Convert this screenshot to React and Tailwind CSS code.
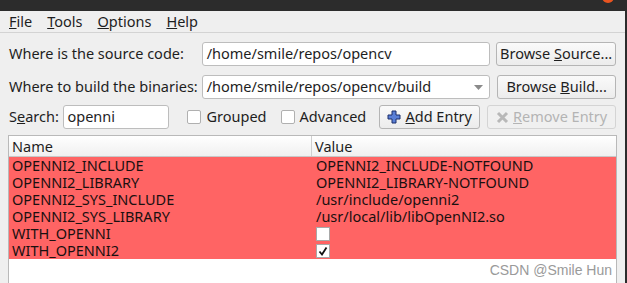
import React from "react";

const font = { fontFamily: '"Noto Sans", "Open Sans", sans-serif' };

const rows = [
  ["OPENNI2_INCLUDE", "OPENNI2_INCLUDE-NOTFOUND"],
  ["OPENNI2_LIBRARY", "OPENNI2_LIBRARY-NOTFOUND"],
  ["OPENNI2_SYS_INCLUDE", "/usr/include/openni2"],
  ["OPENNI2_SYS_LIBRARY", "/usr/local/lib/libOpenNI2.so"],
  ["WITH_OPENNI", "box"],
  ["WITH_OPENNI2", "checked"],
];

function Btn({ children, className = "", disabled }) {
  return (
    <div
      className={
        "h-[24px] flex items-center justify-center rounded-[3px] border text-[14.5px] " +
        (disabled
          ? "border-[#d4d4d4] bg-[#f0f0f0] text-[#b4b4b4] "
          : "border-[#b5b5b5] bg-gradient-to-b from-[#fafafa] to-[#ececec] text-[#1e1e1e] ") +
        className
      }
    >
      {children}
    </div>
  );
}

function Check() {
  return <div className="w-[14px] h-[14px] bg-white border border-[#b0b0b0] rounded-[2px]" />;
}

export default function App() {
  return (
    <div className="w-[627px] h-[283px] overflow-hidden bg-[#2c2c2c] flex flex-col" style={font}>
      {/* title bar remnant */}
      <div className="h-[11px] shrink-0 relative">
        <div className="absolute right-[13px] -top-[9px] w-[12px] h-[12px] rounded-full bg-[#e95420]" />
      </div>
      <div className="flex flex-1 min-h-0">
        <div className="w-[625px] bg-[#efefef] flex flex-col text-[#1e1e1e]">
          {/* menu */}
          <div className="h-[22px] shrink-0 border-b border-[#d3d3d3] flex items-center gap-[15px] pl-[9px] text-[14.5px]">
            <span><u>F</u>ile</span>
            <span><u>T</u>ools</span>
            <span><u>O</u>ptions</span>
            <span><u>H</u>elp</span>
          </div>

          <div className="pl-[9px] pr-[9px] pt-[9px] flex flex-col">
            <div className="flex items-center h-[24px] text-[14.5px]">
              <span className="w-[193px]">Where is the source code:</span>
              <div className="w-[289px] h-[24px] bg-white border border-[#bdbdbd] rounded-[3px] flex items-center px-[4px]">
                /home/smile/repos/opencv
              </div>
              <Btn className="ml-[6px] w-[120px]"><span>Browse <u>S</u>ource...</span></Btn>
            </div>

            <div className="flex items-center h-[24px] mt-[9px] text-[14.5px]">
              <span className="w-[193px]">Where to build the binaries:</span>
              <div className="w-[289px] h-[24px] bg-white border border-[#bdbdbd] rounded-[3px] flex items-center px-[4px] justify-between">
                <span>/home/smile/repos/opencv/build</span>
                <svg width="9" height="5" viewBox="0 0 9 5" className="mr-[2px]">
                  <path d="M0 0h9L4.5 5z" fill="#8a8a8a" />
                </svg>
              </div>
              <Btn className="ml-[7px] w-[119px]"><span>Browse <u>B</u>uild...</span></Btn>
            </div>

            <div className="flex items-center h-[24px] mt-[6px] text-[14.5px]">
              <span className="w-[55px]">S<u>e</u>arch:</span>
              <div className="w-[106px] h-[24px] bg-white border border-[#bdbdbd] rounded-[3px] flex items-center px-[3px]">
                openni
              </div>
              <div className="ml-[18px] flex items-center gap-[6px]">
                <Check />
                <span>Grouped</span>
              </div>
              <div className="ml-[14px] flex items-center gap-[5px]">
                <Check />
                <span>Advanced</span>
              </div>
              <Btn className="ml-[13px] w-[102px] gap-[4px]">
                <svg width="14" height="14" viewBox="0 0 14 14">
                  <path d="M5 1h4v4h4v4H9v4H5V9H1V5h4z" fill="#5a7fd6" stroke="#1c2f6a" strokeWidth="1" />
                </svg>
                <span><u>A</u>dd Entry</span>
              </Btn>
              <Btn disabled className="ml-[7px] w-[130px] gap-[4px]">
                <svg width="13" height="13" viewBox="0 0 13 13">
                  <path d="M2 2l9 9M11 2l-9 9" stroke="#b8b8b8" strokeWidth="3" />
                </svg>
                <span><u>R</u>emove Entry</span>
              </Btn>
            </div>
          </div>

          {/* table */}
          <div className="ml-[8px] mr-[8px] mt-[6px] flex-1 bg-white border-l border-r border-t border-[#b9b9b9] flex flex-col text-[14.5px]">
            <div className="h-[21px] shrink-0 flex bg-gradient-to-b from-[#ffffff] to-[#f0f0f0] border-b border-[#c8c8c8] leading-[20px]">
              <div className="w-[303px] border-r border-[#cfcfcf] pl-[3px] flex items-center">Name</div>
              <div className="pl-[3px] flex items-center">Value</div>
            </div>
            {rows.map(([n, v]) => (
              <div key={n} className="h-[17px] flex items-center bg-[#ff6464] text-[#1a1010] leading-[17px]">
                <div className="w-[304px] pl-[3px]">{n}</div>
                <div className="pl-[3px] flex items-center">
                  {v === "box" ? (
                    <div className="w-[14px] h-[14px] bg-white border border-[#a8a8a8]" />
                  ) : v === "checked" ? (
                    <div className="w-[14px] h-[14px] bg-white border border-[#a8a8a8] flex items-center justify-center">
                      <svg width="10" height="10" viewBox="0 0 10 10">
                        <path d="M1.5 5.5l2.5 3L8.5 1.5" fill="none" stroke="#111" strokeWidth="1.8" />
                      </svg>
                    </div>
                  ) : (
                    v
                  )}
                </div>
              </div>
            ))}
            <div className="flex justify-end pr-[4px] pt-[3px]">
              <span className="text-[14px] leading-[16px] text-[#9a9a9a]" style={{ fontFamily: '"Liberation Sans", Arial, sans-serif' }}>
                CSDN @Smile Hun
              </span>
            </div>
          </div>
        </div>
        <div className="w-[2px] bg-[#2c2c2c]" />
      </div>
    </div>
  );
}
